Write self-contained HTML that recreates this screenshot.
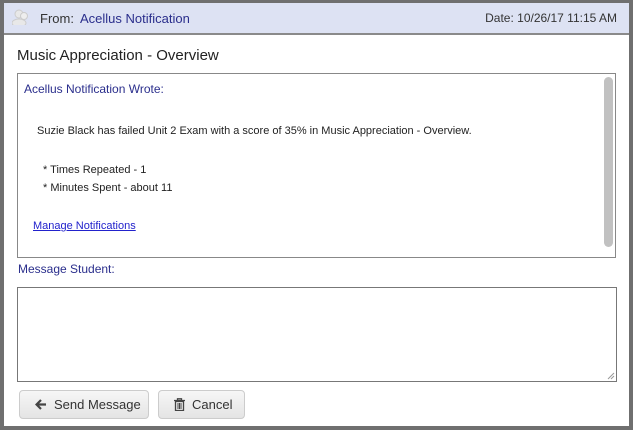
<!DOCTYPE html>
<html><head><style>
*{box-sizing:border-box;margin:0;padding:0}
body{width:633px;height:430px;background:#fff;font-family:"Liberation Sans",sans-serif;position:relative;overflow:hidden}
.frame{position:absolute;left:0;top:0;width:633px;height:430px;border:4px solid #6f6f6f;border-top-width:3px}
.hdr{position:absolute;left:4px;top:3px;width:625px;height:32px;background:#dde2f3;border-bottom:2px solid #8a8a8a}
.t{position:absolute;white-space:nowrap}
.box{position:absolute;left:17px;top:73px;width:599px;height:185px;border:1px solid #888}
.sb{position:absolute;right:2px;top:3px;width:9px;height:170px;background:#c1c1c1;border-radius:5px}
.ta{position:absolute;left:17px;top:287px;width:600px;height:95px;border:1px solid #777}
.btn{position:absolute;top:390px;height:29px;border:1px solid #ccc;border-radius:4px;background:linear-gradient(#f6f6f6,#e4e4e4);font-size:13px;color:#333}
</style></head><body>
<div class="frame"></div>
<div class="hdr">
<svg style="position:absolute;left:8px;top:6px" width="18" height="16"><circle cx="7" cy="5" r="4" fill="#e8e8e8" stroke="#ccc"/><ellipse cx="7" cy="14" rx="7" ry="4" fill="#e8e8e8" stroke="#ccc"/><circle cx="12" cy="7" r="3.5" fill="#eee" stroke="#ccc"/></svg>
<span class="t" style="left:36px;top:8px;font-size:13px;color:#333">From:</span>
<span class="t" style="left:76px;top:8px;font-size:13px;color:#2a2e8c">Acellus Notification</span>
<span class="t" style="right:12px;top:8px;font-size:12px;color:#333">Date: 10/26/17 11:15 AM</span>
</div>
<span class="t" style="left:17px;top:47px;font-size:15px;color:#222">Music Appreciation - Overview</span>
<div class="box"><div class="sb"></div>
<span class="t" style="left:6px;top:8px;font-size:12px;color:#2a2e8c">Acellus Notification Wrote:</span>
<span class="t" style="left:19px;top:51px;font-size:11px;color:#222">Suzie Black has failed Unit 2 Exam with a score of 35% in Music Appreciation - Overview.</span>
<span class="t" style="left:25px;top:90px;font-size:11px;color:#222">* Times Repeated - 1</span>
<span class="t" style="left:25px;top:108px;font-size:11px;color:#222">* Minutes Spent - about 11</span>
<span class="t" style="left:15px;top:146px;font-size:11px;color:#2222cc;text-decoration:underline">Manage Notifications</span>
</div>
<span class="t" style="left:18px;top:262px;font-size:12px;color:#2a2e8c">Message Student:</span>
<div class="ta"><svg style="position:absolute;right:1px;bottom:1px" width="8" height="8"><path d="M1 7L7 1M4 7L7 4" stroke="#999"/></svg></div>
<div class="btn" style="left:19px;width:130px"><svg style="position:absolute;left:15px;top:8px" width="12" height="11"><path d="M6 1L1.5 5.5L6 10M2 5.5H11" stroke="#444" stroke-width="2.2" fill="none"/></svg><span class="t" style="left:34px;top:6px">Send Message</span></div>
<div class="btn" style="left:158px;width:87px"><svg style="position:absolute;left:15px;top:7px" width="11" height="13"><path d="M0 2.5H11M3.5 2.5V0.8H7.5V2.5M1.5 3.5H9.5V12.5H1.5Z" stroke="#444" stroke-width="1.3" fill="none"/><path d="M4 5V11M5.5 5V11M7 5V11" stroke="#444"/></svg><span class="t" style="left:33px;top:6px">Cancel</span></div>
</body></html>
